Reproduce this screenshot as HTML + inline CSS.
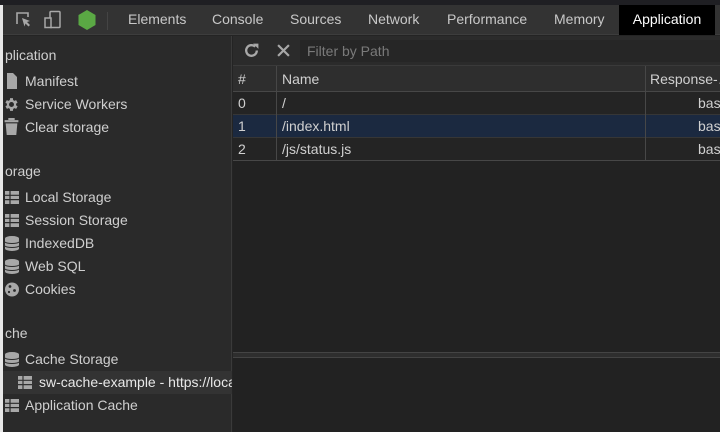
<!DOCTYPE html>
<html><head><meta charset="utf-8"><style>
*{margin:0;padding:0;box-sizing:border-box}
body{width:720px;height:432px;overflow:hidden;background:#242424;font-family:"Liberation Sans",sans-serif;color:#d0d0d0;position:relative;font-size:14px}
.abs{position:absolute}
#top{left:0;top:0;width:720px;height:5px;background:#1f1f23}
#tb{left:0;top:5px;width:720px;height:30px;background:#333333;border-bottom:1px solid #3d3d3d}
.tab{position:absolute;top:5px;height:30px;line-height:29px;font-size:14px;color:#c8c8c8}
#app{left:619px;width:96px;background:#000;color:#fff;text-align:center}
#lb{left:0;top:5px;width:3px;height:427px;background:#e8e8e8}
#side{left:3px;top:36px;width:229px;height:396px;background:#2a2a2a;border-right:1px solid #3a3a3a}
.sh{position:absolute;left:5px;font-size:14px;color:#cfcfcf}
.it{position:absolute;left:25px;font-size:14px;color:#cfcfcf}
.ic{position:absolute;left:5px;width:14px;height:13px}
#sel{left:3px;top:371px;width:229px;height:23px;background:#333}
#ftb{left:233px;top:36px;width:487px;height:30px;background:#2b2b2b;border-bottom:1px solid #3a3a3a}
#filter{left:300px;top:40px;width:420px;height:22px;background:#262626;color:#7a7a7a;font-size:14px;line-height:22px;padding-left:7px}
#th{left:233px;top:66px;width:487px;height:26px;background:#2e2e2e;border-bottom:1px solid #474747}
.row{position:absolute;left:233px;width:487px;height:23px;border-bottom:1px solid #363636;font-size:14px;line-height:22px}
.vl{position:absolute;top:66px;width:1px;height:94px;background:#474747}
.c0{position:absolute;left:5px}.c1{position:absolute;left:49px}.c2{position:absolute;left:465px}
</style></head><body>
<div class="abs" id="top"></div>
<div class="abs" id="tb"></div>
<svg class="abs" style="left:14px;top:10px" width="20" height="20" viewBox="0 0 20 20"><path d="M3 14V3h11v4" fill="none" stroke="#a8a8a8" stroke-width="1.6"/><path d="M8 8l8 3-3 1 3 3-1.5 1.5-3-3-1 3z" fill="#a8a8a8"/></svg>
<svg class="abs" style="left:43px;top:10px" width="20" height="20" viewBox="0 0 20 20"><rect x="7" y="1.5" width="10" height="16" rx="1" fill="none" stroke="#a8a8a8" stroke-width="1.5"/><rect x="2" y="8" width="6" height="9.5" fill="#333" stroke="#a8a8a8" stroke-width="1.5"/></svg>
<svg class="abs" style="left:77px;top:9px" width="20" height="22" viewBox="0 0 20 22"><path d="M10 1l8.5 5v10L10 21l-8.5-5V6z" fill="#5aa844"/></svg>
<div class="abs" style="left:107px;top:12px;width:1px;height:18px;background:#444"></div>
<div class="tab" style="left:128px">Elements</div>
<div class="tab" style="left:212px">Console</div>
<div class="tab" style="left:290px">Sources</div>
<div class="tab" style="left:368px">Network</div>
<div class="tab" style="left:447px">Performance</div>
<div class="tab" style="left:554px">Memory</div>
<div class="tab" id="app">Application</div>
<div class="abs" id="lb"></div>
<div class="abs" id="side"></div>
<div class="abs" id="sel"></div>
<div class="sh" style="top:47px">plication</div>
<svg class="ic" style="top:73px;left:6px;width:12px;height:16px" viewBox="0 0 12 16"><path d="M1 0h6l4 4v12H1z" fill="#a8a8a8"/></svg>
<div class="it" style="top:73px">Manifest</div>
<svg class="ic" style="top:96px;left:3px;width:17px;height:17px" viewBox="0 0 24 24"><path fill="#a8a8a8" d="M19.4 13a7.5 7.5 0 0 0 0-2l2.1-1.6-2-3.5-2.5 1a7 7 0 0 0-1.7-1L15 3h-4l-.4 2.9a7 7 0 0 0-1.7 1l-2.5-1-2 3.5L6.6 11a7.5 7.5 0 0 0 0 2l-2.1 1.6 2 3.5 2.5-1a7 7 0 0 0 1.7 1L11 21h4l.4-2.9a7 7 0 0 0 1.7-1l2.5 1 2-3.5zM13 15.5a3.5 3.5 0 1 1 0-7 3.5 3.5 0 0 1 0 7z" transform="translate(-1 0)"/></svg>
<div class="it" style="top:96px">Service Workers</div>
<svg class="ic" style="top:118px;left:4px;width:15px;height:17px" viewBox="0 0 14 16"><rect x="4" y="0" width="6" height="2" fill="#a8a8a8"/><rect x="0.5" y="2" width="13" height="2" fill="#a8a8a8"/><path d="M1.5 5h11l-1 11h-9z" fill="#a8a8a8"/></svg>
<div class="it" style="top:119px">Clear storage</div>
<div class="sh" style="top:163px">orage</div>
<svg class="ic" style="top:191px" viewBox="0 0 14 13"><path d="M0 0h14v13H0z" fill="#a8a8a8"/><path d="M0 4.3h14M0 8.6h14M5 0v13" stroke="#2a2a2a" stroke-width="1.2"/></svg>
<div class="it" style="top:189px">Local Storage</div>
<svg class="ic" style="top:214px" viewBox="0 0 14 13"><path d="M0 0h14v13H0z" fill="#a8a8a8"/><path d="M0 4.3h14M0 8.6h14M5 0v13" stroke="#2a2a2a" stroke-width="1.2"/></svg>
<div class="it" style="top:212px">Session Storage</div>
<svg class="ic" style="top:236px;height:15px" viewBox="0 0 14 15"><ellipse cx="7" cy="2.5" rx="7" ry="2.5" fill="#a8a8a8"/><rect y="2.5" width="14" height="10" fill="#a8a8a8"/><ellipse cx="7" cy="12.5" rx="7" ry="2.5" fill="#a8a8a8"/><path d="M0 6c2 2 12 2 14 0M0 10c2 2 12 2 14 0" stroke="#2a2a2a" fill="none"/></svg>
<div class="it" style="top:235px">IndexedDB</div>
<svg class="ic" style="top:259px;height:15px" viewBox="0 0 14 15"><ellipse cx="7" cy="2.5" rx="7" ry="2.5" fill="#a8a8a8"/><rect y="2.5" width="14" height="10" fill="#a8a8a8"/><ellipse cx="7" cy="12.5" rx="7" ry="2.5" fill="#a8a8a8"/><path d="M0 6c2 2 12 2 14 0M0 10c2 2 12 2 14 0" stroke="#2a2a2a" fill="none"/></svg>
<div class="it" style="top:258px">Web SQL</div>
<svg class="ic" style="top:282px;height:15px" viewBox="0 0 14 14"><circle cx="7" cy="7" r="7" fill="#a8a8a8"/><circle cx="5" cy="4" r="1.4" fill="#2a2a2a"/><circle cx="9.5" cy="8" r="1.4" fill="#2a2a2a"/><circle cx="4" cy="9.5" r="1.1" fill="#2a2a2a"/></svg>
<div class="it" style="top:281px">Cookies</div>
<div class="sh" style="top:325px">che</div>
<svg class="ic" style="top:352px;height:15px" viewBox="0 0 14 15"><ellipse cx="7" cy="2.5" rx="7" ry="2.5" fill="#a8a8a8"/><rect y="2.5" width="14" height="10" fill="#a8a8a8"/><ellipse cx="7" cy="12.5" rx="7" ry="2.5" fill="#a8a8a8"/><path d="M0 6c2 2 12 2 14 0M0 10c2 2 12 2 14 0" stroke="#2a2a2a" fill="none"/></svg>
<div class="it" style="top:351px">Cache Storage</div>
<svg class="ic" style="top:376px;left:18px" viewBox="0 0 14 13"><path d="M0 0h14v13H0z" fill="#a8a8a8"/><path d="M0 4.3h14M0 8.6h14M5 0v13" stroke="#333" stroke-width="1.2"/></svg>
<div class="it" style="top:374px;left:39px;color:#e8e8e8;white-space:nowrap;width:193px;overflow:hidden">sw-cache-example - https://localhost</div>
<svg class="ic" style="top:399px" viewBox="0 0 14 13"><path d="M0 0h14v13H0z" fill="#a8a8a8"/><path d="M0 4.3h14M0 8.6h14M5 0v13" stroke="#2a2a2a" stroke-width="1.2"/></svg>
<div class="it" style="top:397px">Application Cache</div>
<div class="abs" id="ftb"></div>
<svg class="abs" style="left:243px;top:42px" width="17" height="17" viewBox="0 0 16 16"><path d="M13 8a5 5 0 1 1-1.5-3.6" fill="none" stroke="#a8a8a8" stroke-width="2.2"/><path d="M9.5 1.5h5v5z" fill="#a8a8a8"/></svg>
<svg class="abs" style="left:277px;top:44px" width="13" height="13" viewBox="0 0 12 12"><path d="M1 1l10 10M11 1L1 11" stroke="#a8a8a8" stroke-width="2"/></svg>
<div class="abs" id="filter">Filter by Path</div>
<div class="abs" id="th"><span class="c0" style="line-height:26px">#</span><span class="c1" style="line-height:26px">Name</span><span style="position:absolute;left:417px;line-height:26px">Response-…</span></div>
<div class="row" style="top:92px;background:#242424"><span class="c0">0</span><span class="c1">/</span><span class="c2">bas</span></div>
<div class="row" style="top:115px;background:#1b2940"><span class="c0">1</span><span class="c1">/index.html</span><span class="c2">bas</span></div>
<div class="row" style="top:138px;background:#242424;border-bottom:1px solid #474747"><span class="c0">2</span><span class="c1">/js/status.js</span><span class="c2">bas</span></div>
<div class="vl" style="left:276px"></div>
<div class="vl" style="left:645px"></div>
<div class="abs" style="left:233px;top:161px;width:487px;height:191px;background:#222"></div>
<div class="abs" style="left:233px;top:352px;width:487px;height:6px;background:#2e2e2e;border-top:1px solid #444;border-bottom:1px solid #444"></div>
<div class="abs" style="left:233px;top:358px;width:487px;height:74px;background:#222"></div>
</body></html>
